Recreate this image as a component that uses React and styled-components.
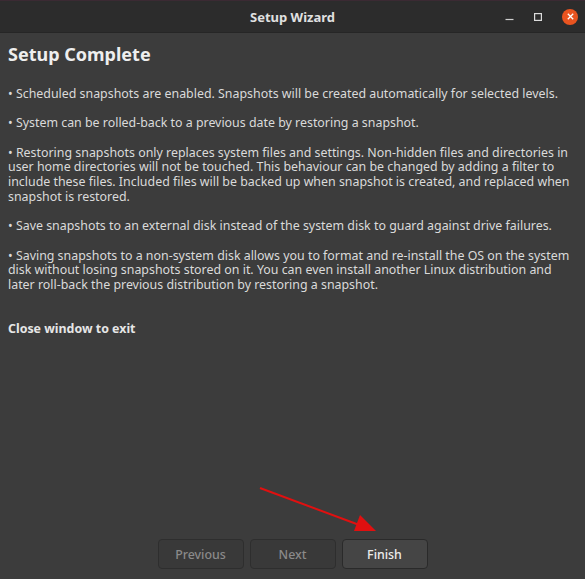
import React from "react";
import styled, { createGlobalStyle } from "styled-components";

const Global = createGlobalStyle`
  html, body { margin: 0; padding: 0; background: #3c3c3c; }
  body { font-family: "Noto Sans", "DejaVu Sans", sans-serif; }
`;

const Window = styled.div`
  width: 585px;
  height: 579px;
  display: flex;
  flex-direction: column;
  background: #3c3c3c;
  position: relative;
  overflow: hidden;
`;

const TitleBar = styled.div`
  height: 33px;
  flex: none;
  display: grid;
  grid-template-columns: 1fr auto 1fr;
  align-items: center;
  background: #2c2c2c;
  border-top: 1px solid #3b2a33;
  box-sizing: border-box;
  border-bottom: 1px solid #262626;
`;

const Title = styled.div`
  grid-column: 2;
  color: #e0e0e0;
  font-weight: 700;
  font-size: 13px;
`;

const Controls = styled.div`
  grid-column: 3;
  justify-self: end;
  display: flex;
  align-items: center;
  gap: 20px;
  padding-right: 7px;
`;

const Ctl = styled.div`
  width: ${(p) => p.$w}px;
  height: 16px;
  display: flex;
  align-items: center;
  justify-content: center;
`;

const CloseCircle = styled.div`
  width: 16px;
  height: 16px;
  border-radius: 50%;
  background: #e95420;
  display: flex;
  align-items: center;
  justify-content: center;
`;

const Content = styled.div`
  flex: 1;
  display: flex;
  flex-direction: column;
  padding: 8px 8px 0 8px;
`;

const Heading = styled.h1`
  margin: 0;
  font-size: 18px;
  font-weight: 700;
  color: #eeeeee;
  line-height: 26px;
`;

const Body = styled.div`
  margin-top: 20px;
  color: #dadada;
  font-size: 12.4px;
  line-height: 14.7px;
  white-space: nowrap;
`;

const Para = styled.div`
  margin: 0 0 14.7px 0;
`;

const Line = styled.div`
  height: 14.7px;
`;

const Exit = styled.div`
  margin: 29.4px 0 0 0;
  font-weight: 700;
  color: #e6e6e6;
`;

const Footer = styled.div`
  margin-top: auto;
  display: flex;
  justify-content: center;
  gap: 6px;
  padding: 0 0 10px 0;
`;

const Button = styled.button`
  width: 86px;
  height: 30px;
  border-radius: 4px;
  border: 1px solid ${(p) => (p.$active ? "#2a2a2a" : "#2e2e2e")};
  background: ${(p) => (p.$active ? "#454545" : "#393939")};
  color: ${(p) => (p.$active ? "#ececec" : "#8a8a8a")};
  font-family: inherit;
  font-size: 12.4px;
  font-weight: 500;
  padding: 0;
`;

const Arrow = styled.svg`
  position: absolute;
  left: 0;
  top: 0;
  pointer-events: none;
`;

const paragraphs = [
  ["• Scheduled snapshots are enabled. Snapshots will be created automatically for selected levels."],
  ["• System can be rolled-back to a previous date by restoring a snapshot."],
  [
    "• Restoring snapshots only replaces system files and settings. Non-hidden files and directories in",
    "user home directories will not be touched. This behaviour can be changed by adding a filter to",
    "include these files. Included files will be backed up when snapshot is created, and replaced when",
    "snapshot is restored.",
  ],
  ["• Save snapshots to an external disk instead of the system disk to guard against drive failures."],
  [
    "• Saving snapshots to a non-system disk allows you to format and re-install the OS on the system",
    "disk without losing snapshots stored on it. You can even install another Linux distribution and",
    "later roll-back the previous distribution by restoring a snapshot.",
  ],
];

export default function App() {
  return (
    <>
      <Global />
      <Window>
        <TitleBar>
          <Title>Setup Wizard</Title>
          <Controls>
            <Ctl $w={9}>
              <svg width="9" height="16" viewBox="0 0 9 16">
                <line x1="0.5" y1="10.5" x2="8.5" y2="10.5" stroke="#cfcfcf" strokeWidth="1.2" />
              </svg>
            </Ctl>
            <Ctl $w={8}>
              <svg width="8" height="8" viewBox="0 0 8 8">
                <rect x="0.6" y="0.6" width="6.8" height="6.8" fill="none" stroke="#dcdcdc" strokeWidth="1.2" />
              </svg>
            </Ctl>
            <Ctl $w={16}>
              <CloseCircle>
                <svg width="7" height="7" viewBox="0 0 7 7">
                  <path d="M0.8 0.8L6.2 6.2M6.2 0.8L0.8 6.2" stroke="#fff" strokeWidth="1.3" />
                </svg>
              </CloseCircle>
            </Ctl>
          </Controls>
        </TitleBar>
        <Content>
          <Heading>Setup Complete</Heading>
          <Body>
            {paragraphs.map((lines, i) => (
              <Para key={i}>
                {lines.map((l, j) => (
                  <Line key={j}>{l}</Line>
                ))}
              </Para>
            ))}
            <Exit>Close window to exit</Exit>
          </Body>
          <Footer>
            <Button disabled>Previous</Button>
            <Button disabled>Next</Button>
            <Button $active>Finish</Button>
          </Footer>
        </Content>
        <Arrow width="585" height="579" viewBox="0 0 585 579">
          <line x1="260" y1="488" x2="362" y2="526" stroke="#e01010" strokeWidth="2" />
          <polygon points="376,531 354,531 360,515" fill="#e01010" />
        </Arrow>
      </Window>
    </>
  );
}
